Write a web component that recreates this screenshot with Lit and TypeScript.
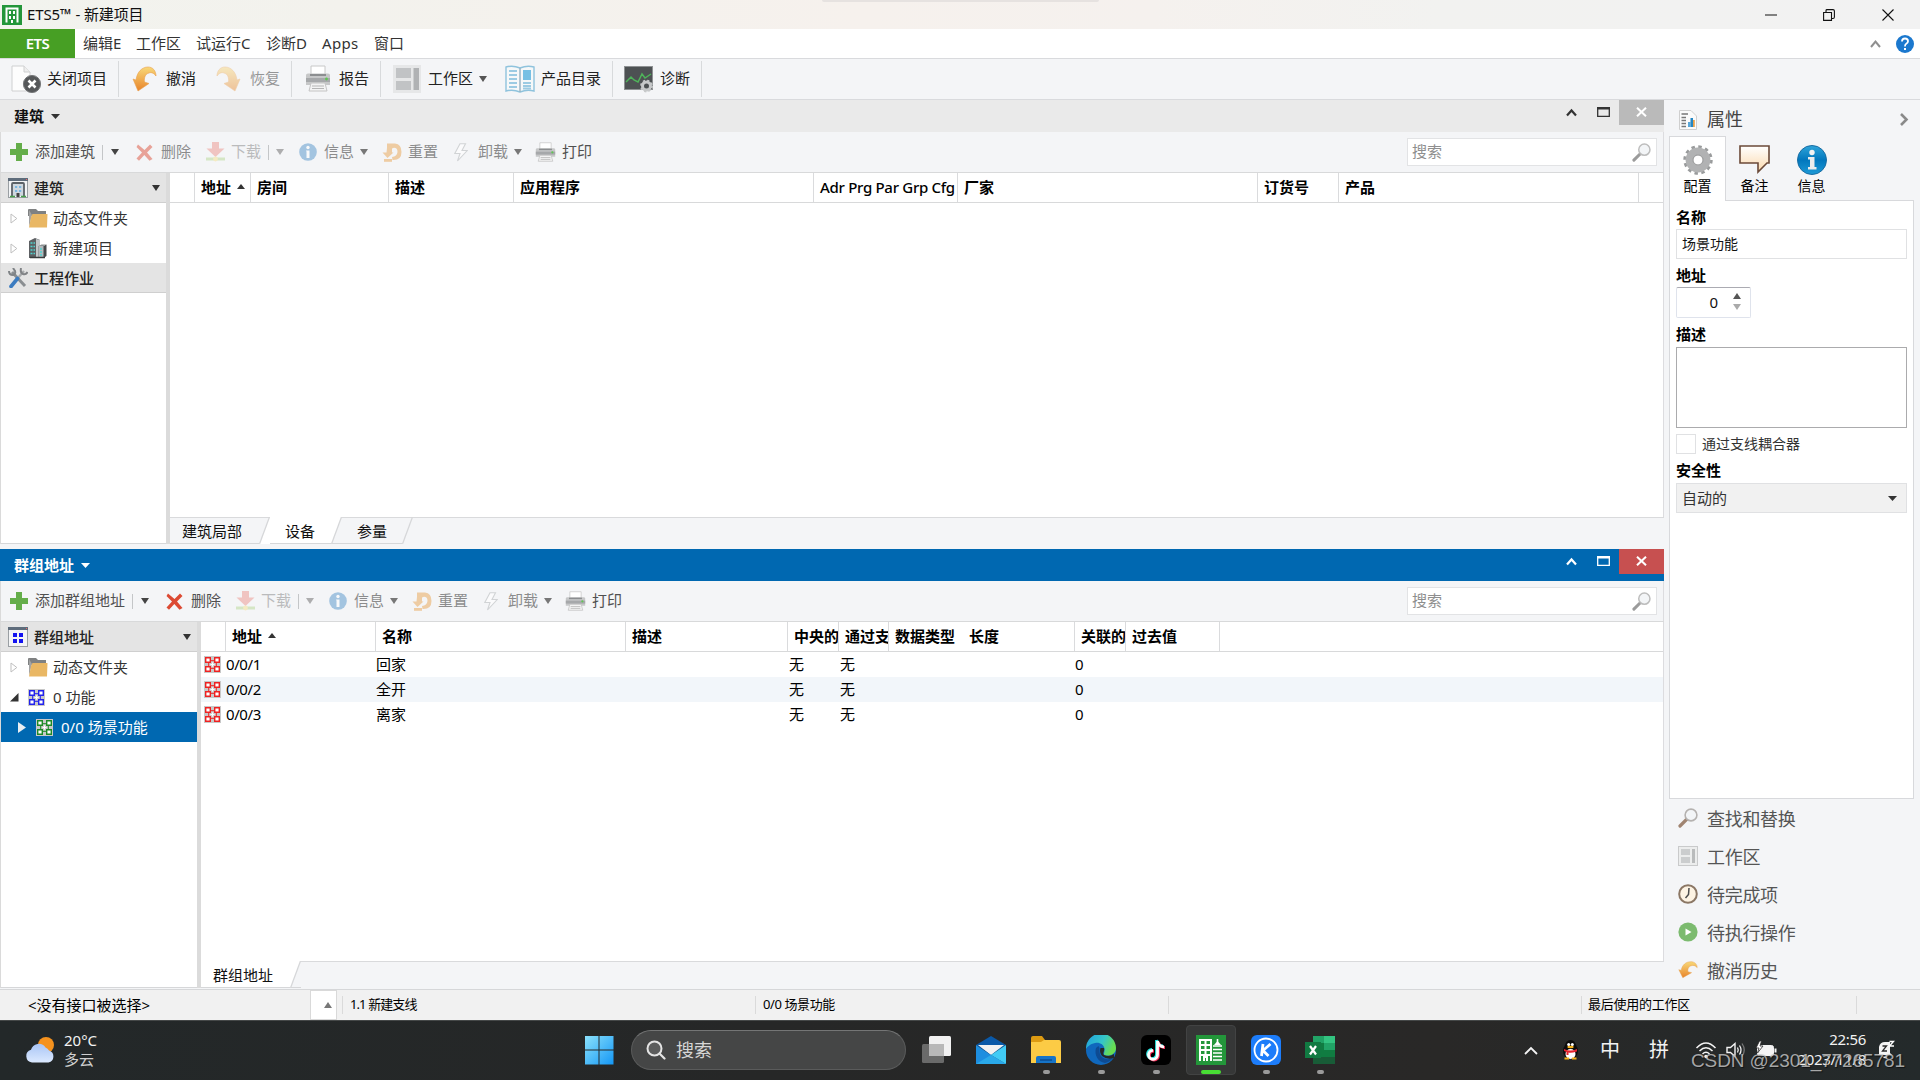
import { LitElement, html, svg, css, nothing } from "lit";
import { customElement } from "lit/decorators.js";

type Item = { x: number; c: unknown; k?: string };

/** Lays items out in a flex row; each item's width reaches to the start of the next one. */
const track = (start: number, end: number, items: Item[]) => html`
  <span class="cell" style="width:${items[0].x - start}px"></span>
  ${items.map((it, i) => {
    const next = i + 1 < items.length ? items[i + 1].x : end;
    return html`<span class="cell ${typeof it.c === "string" ? "t" : ""} ${it.k ?? ""}" style="width:${next - it.x}px">${it.c}</span>`;
  })}`;

const ico = (w: number, h: number, body: unknown, vb = `0 0 ${w} ${h}`) =>
  html`<svg class="ico" width=${w} height=${h} viewBox=${vb} preserveAspectRatio="none">${body}</svg>`;

const down = (color = "#444", w = 8, h = 6) => ico(w, h, svg`<path d="M0 0H10L5 7Z" fill=${color}/>`, "0 0 10 7");
const up = (color = "#444", w = 8, h = 6) => ico(w, h, svg`<path d="M0 7H10L5 0Z" fill=${color}/>`, "0 0 10 7");

const undoShape = svg`
  <defs><linearGradient id="ug" x1="0" y1="0" x2="0" y2="1"><stop offset="0" stop-color="#f8d878"/><stop offset="1" stop-color="#e8842a"/></linearGradient></defs>
  <path d="M1 13L4 14C5 6 10 1 16 1C21 1 24 5 24 10C22 7 19 6 17 7C13 8 12 12 12.500 16L17 17.500L6 25Z" fill="url(#ug)" stroke="#e9a04e" stroke-width=".6"/>`;
const printerShape = svg`
  <path d="M7 1H21V11H7Z" fill="#fff" stroke="#c8c8c8"/>
  <path d="M2 10Q2 8.500 4 8.500H24Q26 8.500 26 10V20H2Z" fill="#c6c7c8"/>
  <path d="M2 13H26V17H2Z" fill="#a6a8aa"/><path d="M6 9H22V11H6Z" fill="#8c8e90"/>
  <circle cx="22.500" cy="14" r="1.400" fill="#5fc653"/>
  <path d="M7 18H21L23 26H5Z" fill="#f3f3f3" stroke="#c4c4c4"/><path d="M8 21H20M8 23.500H20" stroke="#b5b5b5"/>`;
const infoShape = svg`
  <defs><linearGradient id="ig" x1="0" y1="0" x2="0" y2="1"><stop offset="0" stop-color="#2fa5da"/><stop offset=".5" stop-color="#0277bd"/><stop offset="1" stop-color="#1d9ad6"/></linearGradient></defs>
  <circle cx="15" cy="15" r="14.500" fill="url(#ig)" stroke="#1a6da3"/>
  <circle cx="15" cy="7.500" r="2.700" fill="#f2f2f2"/><path d="M11 12H17.500V22H19.500V24.500H11V22H13V14.500H11Z" fill="#ececec"/>`;
const lensShape = (handle: string, ring: string) => svg`
  <path d="M2 18L9 11" stroke=${handle} stroke-width="3.200" stroke-linecap="round"/>
  <circle cx="13" cy="7" r="5.900" fill="#f3f5f7" stroke=${ring} stroke-width="1.600"/>`;

const I = {
  plus: ico(18, 18, svg`<path d="M6 0H12V6H18V12H12V18H6V12H0V6H6Z" fill="#64ad4a"/>`),
  cross: ico(17, 17, svg`<path d="M2 .500L8.500 6L14 .500L16.500 3L11 8.500L16.500 15L13.500 16.800L8.300 11L3 16.800L.500 14.500L6 8.500L.500 3Z" fill="#dc4a33"/>`),
  download: ico(20, 20, svg`<path d="M7 0H14V6.500H19.500L10.500 15L1.500 6.500H7Z" fill="#ec7d73"/><path d="M1 15.500H20V18.500H1Z" fill="#a8d27c"/><circle cx="10.500" cy="17" r="2.400" fill="#f6dc75"/>`),
  info: ico(18, 18, svg`<circle cx="9" cy="9" r="8.800" fill="#2b7cc0"/><circle cx="9" cy="4.500" r="1.700" fill="#fff"/><path d="M7 7.500H10.500V15H7.500V8.800Z" fill="#fff"/>`),
  reset: ico(20, 19, svg`<path d="M5 5V.500H13Q19.500 1 19.500 9Q19.500 17.500 10.500 17L10 14Q15 13.500 15.500 9Q15.500 4.800 12 4.800L10 5.500V9.500H11.500L5.500 15L.500 9.500H4.500Z" fill="#e9a14a"/><path d="M2 16H10V18.800H2Z" fill="#e9a14a"/>`),
  bolt: ico(14, 19, svg`<path d="M6 .700H11.500L8 7.500H13.200L3.500 18L6 10.500H.800Z" fill="#fff" stroke="#c0c3c5" stroke-width="1.100"/>`),
  printer: ico(21, 20, printerShape, "1 0 26 27"),
  lens: ico(19, 19, lensShape("#9b9b9b", "#bdbdbd"), "0 0 20 20"),
  folder: ico(20, 20, svg`<path d="M0 2Q0 1 1 1H8L10 3H18V8H0Z" fill="#7f8182"/><path d="M1 2V19L4 7Z" fill="#a3a4a4"/><path d="M4.500 6H19.500L19 19.500H1L3 9Z" fill="#e9b764"/>`),
  city: ico(19, 21, svg`<path d="M1 3L7 0L12 2V20H1Z" fill="#5d6063"/><path d="M8 1L12 2V20H8Z" fill="#c3c7c9"/><path d="M10.500 8H15.500L18.500 6.500V18L15.500 20H10.500Z" fill="#45484a"/><path d="M10.500 8L13.500 6.500H18.500L15.500 8Z" fill="#8b8f91"/><path d="M10.500 8H15.500V20H10.500Z" fill="#b3babd"/>
    <path d="M2.500 5H4.500M2.500 8.500H4.500M2.500 12H4.500M2.500 15.500H4.500M5.500 5H7M5.500 8.500H7M5.500 12H7M5.500 15.500H7M12 11H14M12 14H14M12 17H14" stroke="#50d2d0" stroke-width="1.500"/><path d="M2 19.500H17" stroke="#3a3c3d" stroke-width="1.500"/>`),
  building: ico(20, 20, svg`<rect x=".500" y=".500" width="19" height="19" fill="#f2f4f6" stroke="#9a9fa3"/><path d="M0 0H20V3H0Z" fill="#5e6c7b"/><path d="M18 1.500h1" stroke="#e66"/><path d="M4 18V6Q4 5 5 5H15Q16 5 16 6V18" fill="#cfd8df" stroke="#5b6268" stroke-width="1.800"/>
    <path d="M7 8h2.200v2H7zM11 8h2.200v2H11zM7 12h2.200v2H7zM11 12h2.200v2H11z" fill="#7bb7e0"/><path d="M8.500 15H11.500V19H8.500Z" fill="#444"/><path d="M2 18.500H7M13 18.500H18" stroke="#46a04a" stroke-width="1.600"/>`),
  tools: ico(20, 20, svg`<path d="M4 4L17 18" stroke="#8a8e91" stroke-width="3"/><path d="M1 3Q1 7 5 7Q8 6 7 3L5 0" fill="none" stroke="#7f8386" stroke-width="2"/><path d="M16 3L9 11" stroke="#a9acae" stroke-width="2.400"/><path d="M13 0Q12 5 15 6Q18 7 19.500 4" fill="none" stroke="#808386" stroke-width="2"/><path d="M9.500 10.500L3 18.500" stroke="#3c7cc0" stroke-width="3.600" stroke-linecap="round"/>`),
  groupHead: ico(20, 20, svg`<rect x=".500" y=".500" width="19" height="19" fill="#f4f5f6" stroke="#9a9fa3"/><path d="M0 0H20V3H0Z" fill="#5e6c7b"/><path d="M18 1.500h1" stroke="#e66"/><path d="M5 6h4v4H5zM11 6h4v4h-4zM5 12h4v4H5zM11 12h4v4h-4z" fill="#1313f0"/>`),
};

const groupIcon = (c: string) =>
  ico(17, 17, svg`<rect width="17" height="17" fill="#c8c8c8"/>
    <path d="M6 4.700H11M6 12.300H11M4.700 6V11M12.300 6V11" stroke=${c} stroke-width="1"/>
    <path d="M1.700 1.700H6.300V6.300H1.700ZM10.700 1.700H15.300V6.300H10.700ZM1.700 10.700H6.300V15.300H1.700ZM10.700 10.700H15.300V15.300H10.700Z" fill="#fff" stroke=${c} stroke-width="1.400"/>
    <path d="M8.500 6.500V10.500M6.500 8.500H10.500" stroke="#fff" stroke-width="1.200"/>`);

const L = {
  closeDoc: ico(30, 28, svg`<path d="M1 1H13L19 7V26H1Z" fill="#fdfdfd" stroke="#cfd0d1"/><path d="M13 1V7H19" fill="#eee" stroke="#cfd0d1"/><circle cx="21" cy="19" r="8.600" fill="#56585a" stroke="#77797b"/><path d="M17.500 15.500L24.500 22.500M24.500 15.500L17.500 22.500" stroke="#fff" stroke-width="2.600"/>`),
  undo: ico(25, 26, undoShape),
  redo: html`<span class="flip">${ico(25, 26, undoShape)}</span>`,
  printer: ico(28, 27, printerShape, "0 0 28 27"),
  workspace: ico(28, 28, svg`<rect width="28" height="28" fill="#e6e7e8"/><path d="M3 3H18V13H3ZM3 16H18V25H3Z" fill="#c1c3c5"/><path d="M20.500 3H26V25H20.500Z" fill="#b0b2b4"/>`),
  book: ico(30, 28, svg`<path d="M1 2Q8 0 15 3Q22 0 29 2V26Q22 24 15 27Q8 24 1 26Z" fill="#f6f8f9" stroke="#8fc3dd" stroke-width="1.400"/><path d="M15 3V27" stroke="#9ab6c5" stroke-width="1.500"/><path d="M4 6H12M4 10H12M4 14H12M4 18H12M4 22H12M18 18H26M18 21H26M18 23.500H26" stroke="#9ccbe3" stroke-width="1.800"/><path d="M18 5H26V15H18Z" fill="#77c0e4"/>`),
  diag: ico(30, 28, svg`<rect x=".500" y="1.500" width="28" height="23" fill="#4d5153" stroke="#8e9193"/><path d="M2 17L7 12L10 15L14 17L18 9L21 13L27 9" fill="none" stroke="#4fb35a" stroke-width="1.500"/><circle cx="22.500" cy="21" r="4" fill="none" stroke="#c7c9ca" stroke-width="3"/><circle cx="22.500" cy="21" r="5.600" fill="none" stroke="#c7c9ca" stroke-width="1.600" stroke-dasharray="2.200 2.200"/>`),
};

const gear = ico(30, 30, svg`<circle cx="15" cy="15" r="13.200" fill="none" stroke="#999b9c" stroke-width="3" stroke-dasharray="3.450 3.450"/><circle cx="15" cy="15" r="8.800" fill="none" stroke="#b1b2b3" stroke-width="7.200"/><circle cx="15" cy="15" r="5" fill="none" stroke="#8e8f90" stroke-width="1"/>`);
const note = ico(31, 29, svg`<defs><linearGradient id="ng" x1="0" y1="0" x2="0" y2="1"><stop offset="0" stop-color="#fff"/><stop offset="1" stop-color="#fbd9ac"/></linearGradient></defs><path d="M1 1H30V18H28L19 27V18H1Z" fill="url(#ng)" stroke="#6b4a38" stroke-width="1.600"/>`);

const sortUp = html`<span class="sort">${up("#333", 8, 5)}</span>`;

const base = css`
  * { box-sizing: border-box; }
  .cell { display: flex; align-items: center; flex: none; white-space: nowrap; height: 100%; }
  .ico { display: block; flex: none; }
`;

@customElement("ets-panel")
class EtsPanel extends LitElement {
  static properties = { kind: { type: String } };
  declare kind: string;
  static styles = [base, css`
    :host { display: block; width: 1664px; }
    .head { display: flex; height: 32px; background: #eaeaea; color: #111; font-weight: 700; }
    .head.on { background: #0068b1; color: #fff; }
    .win { align-items: flex-start; }
    .close { width: 45px; height: 25px; background: #bababa; display: flex; align-items: center; justify-content: center; padding-bottom: 2px; }
    .on .close { background: #c75050; }
    .ctl { padding-top: 7px; }
    .bar { display: flex; height: 40px; background: #f4f5f7; border-left: 1px solid #dadada; border-right: 1px solid #dcdcdf; color: #666; }
    .bar .t, .line .t { padding-bottom: 2px; }
    .dim { opacity: .4; }
    .half { opacity: .66; color: #555; }
    .ihalf { opacity: .48; }
    .str { color: #505050; }
    .vsep { width: 1px; height: 15px; background: #c4c6c8; }
    .search { width: 250px; height: 28px; background: #fff; border: 1px solid #e2e3e5; display: flex; align-items: center; justify-content: space-between; padding: 0 5px 0 4px; color: #8e8e8e; }
    .search span { padding-bottom: 2px; }
    .body { display: flex; border-top: 1px solid #d8d9da; border-left: 1px solid #dadada; }
    .b1 { height: 372px; } .b2 { height: 367px; }
    .tree { background: #fff; border-bottom: 1px solid #d6d7d9; flex: none; color: #333; }
    .b1 .tree { width: 165px; } .b2 .tree { width: 196px; }
    .trow { display: flex; height: 30px; }
    .thead { background: #e4e4e4; border-bottom: 1px solid #cfcfcf; font-weight: 500; }
    .thead .lbl { font-weight: 500; color: #222; }
    .sel { background: #0068b1; color: #fff; }
    .split { width: 4px; background: #dbdbdb; flex: none; }
    .table { flex: 1; display: flex; flex-direction: column; min-width: 0; }
    .grid { flex: 1; background: #fff; border-right: 1px solid #dcdcdf; color: #000; }
    .cols { display: flex; height: 30px; border-bottom: 1px solid #d8d9da; font-weight: 700; }
    .col { border-right: 1px solid #dadbdd; padding: 0 0 2px 6px; overflow: hidden; white-space: nowrap; display: flex; align-items: center; flex: none; gap: 6px; }
    .col.open { border-right-color: transparent; }
    .adr { font-weight: 500; letter-spacing: -.3px; }
    .sort { padding-bottom: 1px; }
    .line { display: flex; height: 25px; }
    .line:nth-child(odd) { background: #f2f6fa; }
    .num { letter-spacing: -.4px; }
    .tabs { display: flex; height: 27px; background: #f4f5f7; color: #111; }
    .tab { border-top: 1px solid #d9dadc; border-bottom: 1px solid #d6d7d9; display: flex; align-items: center; flex: none; }
    .tab.act { background: #fff; border-top-color: #fff; }
    .fill { flex: 1; border-top: 1px solid #d9dadc; }
  `];

  private slant(left: string, right: string) {
    return ico(11, 27, svg`<path d="M0 0H10.500L.500 27H0Z" fill=${left}/><path d="M10.500 0H11V27H.500Z" fill=${right}/>
      ${left === "#fff" ? nothing : svg`<path d="M0 .500H10.500" stroke="#d9dadc"/>`}
      ${right === "#fff" || left === right ? nothing : svg`<path d="M.500 26.500H11" stroke="#d6d7d9"/>`}
      <path d="M10.500 0L.500 27" stroke="#d6d7d9" stroke-width="1.300"/>`);
  }

  private toolbar(two: boolean) {
    const d = two ? 30 : 0;
    const sep = html`<i class="vsep"></i>`;
    return html`<div class="bar">${track(1, 1663, [
      { x: 10, c: I.plus }, { x: 35, c: two ? "添加群组地址" : "添加建筑", k: "str" },
      { x: 102 + d, c: sep }, { x: 111 + d, c: down() },
      { x: 136 + d, c: I.cross, k: two ? "" : "ihalf" }, { x: 161 + d, c: "删除", k: two ? "str" : "half" },
      { x: 205 + d, c: I.download, k: "dim" }, { x: 231 + d, c: "下载", k: "dim" }, { x: 268 + d, c: sep }, { x: 276 + d, c: down(), k: "dim" },
      { x: 299 + d, c: I.info, k: "dim" }, { x: 324 + d, c: "信息", k: "half" }, { x: 360 + d, c: down("#777") },
      { x: 382 + d, c: I.reset, k: "ihalf" }, { x: 408 + d, c: "重置", k: "half" },
      { x: 454 + d, c: I.bolt, k: "half" }, { x: 478 + d, c: "卸载", k: "half" }, { x: 514 + d, c: down("#777") },
      { x: 535 + d, c: I.printer }, { x: 562 + d, c: "打印", k: "str" },
      { x: 1407, c: html`<div class="search"><span>搜索</span>${I.lens}</div>` },
    ])}</div>`;
  }

  private head(two: boolean) {
    const c = two ? "#fff" : "#333";
    return html`<div class="head ${two ? "on" : ""}">${track(0, 1664, [
      { x: 14, c: two ? "群组地址" : "建筑" }, { x: two ? 81 : 51, c: down(c, 9, 5) },
      { x: 1566, k: "win", c: html`<span class="ctl">${ico(11, 10, svg`<path d="M1 8.500L5.500 3.500L10 8.500" fill="none" stroke=${c} stroke-width="2.200"/>`)}</span>` },
      { x: 1597, k: "win", c: html`<span class="ctl">${ico(13, 10, svg`<path d="M.700 1H12.300V9.300H.700Z" fill="none" stroke=${c} stroke-width="1.300"/><path d="M0 0H13V2.500H0Z" fill=${c}/>`)}</span>` },
      { x: 1619, k: "win", c: html`<span class="close">${ico(11, 10, svg`<path d="M1 .700L10 9.300M10 .700L1 9.300" stroke="#fff" stroke-width="2"/>`)}</span>` },
    ])}</div>`;
  }

  private exp = ico(8, 11, svg`<path d="M1 1L6.800 5.500L1 10Z" fill="#fff" stroke="#bfbfbf"/>`);

  private cols(list: [number, unknown, string?][]) {
    return html`<div class="cols">${list.map(([w, t, k]) => html`<div class="col ${k ?? ""}" style="width:${w}px">${t}</div>`)}</div>`;
  }

  render() {
    const two = this.kind === "groups";
    if (!two) {
      return html`${this.head(false)}${this.toolbar(false)}
        <div class="body b1">
          <div class="tree">
            <div class="trow thead">${track(1, 166, [{ x: 8, c: I.building }, { x: 34, c: "建筑", k: "lbl" }, { x: 152, c: down("#333") }])}</div>
            <div class="trow">${track(1, 166, [{ x: 10, c: this.exp }, { x: 28, c: I.folder }, { x: 53, c: "动态文件夹" }])}</div>
            <div class="trow">${track(1, 166, [{ x: 10, c: this.exp }, { x: 28, c: I.city }, { x: 53, c: "新建项目" }])}</div>
            <div class="trow thead">${track(1, 166, [{ x: 8, c: I.tools }, { x: 34, c: "工程作业", k: "lbl" }])}</div>
          </div>
          <div class="split"></div>
          <div class="table">
            <div class="grid">${this.cols([[25, ""], [56, html`地址${sortUp}`], [138, "房间"], [125, "描述"], [300, "应用程序"], [144, "Adr Prg Par Grp Cfg", "adr"], [300, "厂家"], [81, "订货号"], [300, "产品"]])}</div>
            <div class="tabs">
              <div class="tab" style="width:89px">${track(170, 259, [{ x: 182, c: "建筑局部" }])}</div>${this.slant("#f4f5f7", "#fff")}
              <div class="tab act" style="width:61px">${track(270, 331, [{ x: 285, c: "设备" }])}</div>${this.slant("#fff", "#f4f5f7")}
              <div class="tab" style="width:60px">${track(342, 402, [{ x: 357, c: "参量" }])}</div>${this.slant("#f4f5f7", "#f4f5f7")}
              <div class="fill"></div>
            </div>
          </div>
        </div>`;
    }
    const names = ["回家", "全开", "离家"];
    return html`${this.head(true)}${this.toolbar(true)}
      <div class="body b2">
        <div class="tree">
          <div class="trow thead">${track(1, 197, [{ x: 8, c: I.groupHead }, { x: 34, c: "群组地址", k: "lbl" }, { x: 183, c: down("#333") }])}</div>
          <div class="trow">${track(1, 197, [{ x: 10, c: this.exp }, { x: 28, c: I.folder }, { x: 53, c: "动态文件夹" }])}</div>
          <div class="trow">${track(1, 197, [{ x: 10, c: ico(9, 9, svg`<path d="M8.500 0V8.500H0Z" fill="#333"/>`) }, { x: 28, c: groupIcon("#2222ee") }, { x: 53, c: "0 功能" }])}</div>
          <div class="trow sel">${track(1, 197, [{ x: 18, c: ico(8, 11, svg`<path d="M0 0L8 5.500L0 11Z" fill="#e9eef2"/>`) }, { x: 36, c: groupIcon("#1d8a25") }, { x: 61, c: "0/0 场景功能" }])}</div>
        </div>
        <div class="split"></div>
        <div class="table">
          <div class="grid">
            ${this.cols([[25, ""], [150, html`地址${sortUp}`], [250, "名称"], [162, "描述"], [51, "中央的"], [50, "通过支"], [74, "数据类型", "open"], [112, "长度"], [51, "关联的"], [94, "过去值"]])}
            ${names.map((n, i) => html`<div class="line">${track(201, 1663, [{ x: 204, c: groupIcon("#ee2222") }, { x: 226, c: `0/0/${i + 1}`, k: "num" }, { x: 376, c: n }, { x: 789, c: "无" }, { x: 840, c: "无" }, { x: 1075, c: "0" }])}</div>`)}
          </div>
          <div class="tabs">
            <div class="tab act" style="width:89px">${track(201, 290, [{ x: 213, c: "群组地址" }])}</div>${this.slant("#fff", "#f4f5f7")}
            <div class="fill"></div>
          </div>
        </div>
      </div>`;
  }
}

@customElement("ets-sidebar")
class EtsSidebar extends LitElement {
  static styles = [base, css`
    :host { display: flex; flex-direction: column; width: 256px; height: 889px; background: #f4f5f7; padding-left: 5px; }
    .top { display: flex; height: 36px; font-size: 18px; color: #444; padding-top: 3px; }
    .top .t { padding-bottom: 2px; }
    .tabs { display: flex; height: 65px; font-size: 14px; color: #000; }
    .tab { width: 57px; display: flex; flex-direction: column; align-items: center; padding-top: 8px; border-bottom: 1px solid #d8d9dc; }
    .tab.act { border: 1px solid #d8d9dc; border-bottom: 0; background: #fff; padding-top: 7px; }
    .pic { height: 32px; padding-top: 1px; display: flex; }
    .tab span { line-height: 20px; }
    .rest { width: 74px; border-bottom: 1px solid #d8d9dc; }
    .form { width: 245px; height: 598px; border: 1px solid #d8d9dc; border-top: 0; background: #fff; padding: 6px 6px 0 6px; color: #333; }
    .h { font-weight: 700; color: #000; height: 22px; line-height: 20px; }
    .up1 { line-height: 18px; }
    .inp { height: 30px; border: 1px solid #e0e1e3; display: flex; align-items: center; padding: 0 0 0 5px; font-size: 14px; color: #111; margin-bottom: 6px; }
    .spin { width: 75px; height: 31px; border: 1px solid #dfe3ec; border-top-color: #ababb2; border-radius: 2px; display: flex; align-items: center; justify-content: flex-end; padding: 0 9px 1px 0; gap: 15px; color: #111; margin: 0 0 7px; }
    .arrows { display: flex; flex-direction: column; gap: 5px; padding-bottom: 2px; }
    .area { height: 81px; border: 1px solid #ababad; margin-bottom: 6px; }
    .chk { display: flex; align-items: center; gap: 6px; height: 20px; font-size: 14px; margin-bottom: 7px; }
    .box { width: 20px; height: 20px; border: 1px solid #e0e1e3; }
    .dd { height: 30px; background: #f1f1f1; border: 1px solid #e0e1e3; display: flex; align-items: center; justify-content: space-between; padding: 0 9px 0 5px; }
    .li { display: flex; align-items: center; height: 38px; gap: 9px; padding-left: 9px; font-size: 18px; color: #555; letter-spacing: -.3px; }
    .li span { padding-top: 1px; }
  `];
  render() {
    const li = (i: unknown, t: string) => html`<div class="li">${i}<span>${t}</span></div>`;
    return html`
      <div class="top">${track(1669, 1920, [
        { x: 1679, c: ico(18, 20, svg`<path d="M.500 .500H12L17.500 6V19.500H.500Z" fill="#fafafa" stroke="#cfcfcf"/><path d="M2.500 4H9M2.500 7.500H7M2.500 10.500H7M2.500 13.500H7M2.500 16.500H7" stroke="#777" stroke-width="1.300"/><path d="M9 17V12H11.500V17Z" fill="#5aa7d8"/><path d="M11.500 17V8H14V17Z" fill="#2487c4"/><path d="M14 17V10H15.800V17Z" fill="#e9a14a"/>`) },
        { x: 1707, c: "属性" },
        { x: 1899, c: ico(10, 13, svg`<path d="M2 1L7.500 6.500L2 12" fill="none" stroke="#8a8a8a" stroke-width="2.600"/>`) },
      ])}</div>
      <div class="tabs">
        <div class="tab act"><div class="pic">${gear}</div><span>配置</span></div>
        <div class="tab"><div class="pic">${note}</div><span>备注</span></div>
        <div class="tab"><div class="pic">${ico(30, 30, infoShape)}</div><span>信息</span></div>
        <div class="rest"></div>
      </div>
      <div class="form">
        <div class="h">名称</div><div class="inp">场景功能</div>
        <div class="h">地址</div><div class="spin">0<div class="arrows">${up("#555", 8, 6)}${down("#aaa", 8, 6)}</div></div>
        <div class="h up1">描述</div><div class="area"></div>
        <div class="chk"><i class="box"></i>通过支线耦合器</div>
        <div class="h up1">安全性</div><div class="dd">自动的${down("#333", 9, 5)}</div>
      </div>
      <div class="list">
        ${li(ico(20, 20, lensShape("#a08471", "#b5b2b0")), "查找和替换")}
        ${li(ico(20, 20, svg`<rect x=".500" y=".500" width="19" height="19" fill="#eceded" stroke="#c9cacb"/><path d="M3 3H12V9H3ZM3 11H12V17H3Z" fill="#cbcdce"/><path d="M14 3H17V17H14Z" fill="#b9bbbc"/>`), "工作区")}
        ${li(ico(20, 20, svg`<circle cx="10" cy="10" r="8.800" fill="#fdf3e3" stroke="#8b7765" stroke-width="2"/><path d="M11 4L10.500 10.500L7.500 14" fill="none" stroke="#4c4c4c" stroke-width="1.500"/>`), "待完成项")}
        ${li(ico(20, 20, svg`<circle cx="10" cy="10" r="9.600" fill="#7cbb6f"/><path d="M7.500 6.500L13.500 10L7.500 13.500Z" fill="#fff"/>`), "待执行操作")}
        ${li(ico(20, 18, undoShape, "0 0 25 27"), "撤消历史")}
      </div>`;
  }
}

@customElement("win-taskbar")
class WinTaskbar extends LitElement {
  static styles = [base, css`
    :host { display: flex; height: 60px; background: linear-gradient(90deg, #232829, #262727 40%, #292827 75%, #242a2b); color: #f2f2f2; border-top: 1px solid #454848; padding-bottom: 1px; }
    .two { display: flex; flex-direction: column; line-height: 19px; justify-content: center; }
    .dimt { color: #cfcfcf; }
    .pill { width: 275px; height: 40px; border-radius: 20px; background: #454646; border: 1px solid #5a5b5b; border-top-color: #747575; display: flex; align-items: center; gap: 10px; padding-left: 14px; font-size: 18px; color: #d6d6d6; }
    .app { width: 50px; height: 50px; display: flex; flex-direction: column; align-items: center; padding-top: 9px; border-radius: 4px; border: 1px solid transparent; gap: 5px; }
    .app.act { background: #363737; border-color: #424343; }
    .dot { width: 7px; height: 4px; border-radius: 2px; background: #9a9a9a; }
    .act .dot { width: 20px; background: #48dd34; }
    .ime { font-size: 20px; }
    .clock { align-items: flex-end; width: 71px; padding-bottom: 2px; line-height: 20px; }
    .clock span { letter-spacing: -.3px; }
  `];
  render() {
    const app = (i: unknown, k = "", dot = true) => html`<div class="app ${k}">${i}${dot ? html`<i class="dot"></i>` : nothing}</div>`;
    const a = (b: unknown) => ico(30, 30, b);
    return track(0, 1920, [
      { x: 25, c: ico(30, 26, svg`<defs><linearGradient id="c" x1="0" y1="0" x2="0" y2="1"><stop offset="0" stop-color="#a9c5f5"/><stop offset="1" stop-color="#dbe9ff"/></linearGradient></defs><circle cx="21" cy="8" r="8" fill="#f5921e"/><path d="M7 25.500A6.500 6.500 0 0 1 6 12.800A8 8 0 0 1 20.500 10.500A6 6 0 0 1 24 13.500A6.200 6.200 0 0 1 23.500 25.500Z" fill="url(#c)"/>`) },
      { x: 64, c: html`<div class="two"><span>20°C</span><span class="dimt">多云</span></div>` },
      { x: 584, c: a(svg`<defs><linearGradient id="w" x1="0" y1="0" x2="1" y2="1"><stop offset="0" stop-color="#8be1fb"/><stop offset="1" stop-color="#1497f5"/></linearGradient></defs><path d="M1 1H14.500V14.500H1ZM15.500 1H29.500V14.500H15.500ZM1 15.500H14.500V29.500H1ZM15.500 15.500H29.500V29.500H15.500Z" fill="url(#w)"/>`) },
      { x: 631, c: html`<div class="pill">${ico(20, 20, svg`<circle cx="8.500" cy="8.500" r="7" fill="#5c5d5d" stroke="#e4e4e4" stroke-width="2"/><path d="M13.500 13.500L18.500 18.500" stroke="#e4e4e4" stroke-width="2.200" stroke-linecap="round"/>`)}<span>搜索</span></div>` },
      { x: 911, c: app(a(svg`<rect x="8" y="1" width="22" height="20" rx="1.500" fill="#f1f1f1"/><rect x="1" y="9" width="22" height="19" rx="1.500" fill="#777" opacity=".85"/><path d="M8 9H23V21H8Z" fill="#b8b8b8"/>`), "", false) },
      { x: 966, c: app(a(svg`<path d="M0 10L15 1L30 10L15 20Z" fill="#0a59a8"/><path d="M2 10H28L15 20Z" fill="#f2f2f2"/><path d="M0 10L15 20L30 29H0Z" fill="#1d8ee0"/><path d="M30 10L15 20L30 29Z" fill="#41cbf5"/><path d="M0 29L15 20L30 29Z" fill="#2aa9ea"/>`), "", false) },
      { x: 1021, c: app(a(svg`<path d="M0 3Q0 1 2 1H11L14 5H28V12H0Z" fill="#dd9b12"/><path d="M0 7L10 7L13 5H28Q30 5 30 7V28H0Z" fill="#fccb45"/><path d="M5 28V23Q5 21 7 21H23Q25 21 25 23V28Z" fill="#1674c8"/><path d="M9 25H21" stroke="#0c4f96" stroke-width="1.600"/>`)) },
      { x: 1076, c: app(a(svg`<defs><linearGradient id="e" x1="0" y1="0" x2="1" y2=".4"><stop offset="0" stop-color="#1f9fe0"/><stop offset=".6" stop-color="#35c6c8"/><stop offset="1" stop-color="#68dd51"/></linearGradient></defs>
        <circle cx="15" cy="15" r="15" fill="#1068bd"/><path d="M0 14A15 15 0 0 1 30 13C30 19 24 22 18.500 20C17 19 19 17 18.500 14C18 9 13 7 9 8C4 9 1 12 0 14Z" fill="url(#e)"/><path d="M10 13C8 20 12 27 19 28Q24 27 27 23C20 26 13 23 13.500 15Q14 13 12.500 11Z" fill="#0e4b93"/><path d="M18 13C19 16 16 18 18 20Q23 22.500 28 19V23Q21 25 16 21Q13 17 14.500 13Z" fill="#262828"/>`)) },
      { x: 1131, c: app(a(svg`<rect width="30" height="30" rx="6" fill="#000"/><g fill="none" stroke-width="2.800"><path d="M15.500 5V19A4.500 4.500 0 1 1 11 14.500M15.500 5Q16.500 11 22 11" stroke="#2ce8e4"/><path d="M17.500 7V20.500A4.500 4.500 0 1 1 13 16M17.500 7Q18.500 12.500 24 12.500" stroke="#f7325a"/><path d="M16.500 6V19.800A4.500 4.500 0 1 1 12 15.300M16.500 6Q17.500 11.800 23 11.800" stroke="#fff"/></g>`)) },
      { x: 1186, c: app(a(svg`<rect width="30" height="30" fill="#23963a"/><path d="M4 26V5H15V26M8 26V22H11V26M4 10H15M4 15H15M4 20H15M9.500 5V20" fill="none" stroke="#fff" stroke-width="2"/><path d="M17 11H26M17 14.500H26M17 18H26M17 21.500H26M17 25H26M21.500 4V10" stroke="#fff" stroke-width="1.600"/><path d="M18 10L21.500 6L25 10Z" fill="#fff"/>`), "act") },
      { x: 1241, c: app(a(svg`<rect width="30" height="30" rx="6" fill="#1d7dfa"/><circle cx="15" cy="15" r="11.500" fill="none" stroke="#fff" stroke-width="1.800"/><path d="M12 9L10.500 21M19.500 9L12 15.500L17.500 21" fill="none" stroke="#fff" stroke-width="2.800"/>`)) },
      { x: 1295, c: app(a(svg`<path d="M8 1H19V8H8Z" fill="#21a366"/><path d="M19 1H30V8H19Z" fill="#33c481"/><path d="M8 8H19V15H8Z" fill="#107c41"/><path d="M19 8H30V15H19Z" fill="#21a366"/><path d="M8 15H30V22H8Z" fill="#107c41"/><path d="M8 22H30V29H8Z" fill="#185c37"/><path d="M0 7H16V23H0Z" fill="#117a42"/><path d="M5 11L11 19.500M11 11L5 19.500" stroke="#fff" stroke-width="2.200"/>`)) },
      { x: 1524, c: ico(14, 9, svg`<path d="M1 8L7 2L13 8" fill="none" stroke="#f4f4f4" stroke-width="1.800"/>`) },
      { x: 1562, c: ico(17, 20, svg`<ellipse cx="8.500" cy="11" rx="7.500" ry="8" fill="#0c0c0c"/><ellipse cx="8.500" cy="6" rx="5.500" ry="6" fill="#0c0c0c"/><ellipse cx="8.500" cy="14" rx="5" ry="5" fill="#fff"/><circle cx="6.700" cy="4.500" r="1.500" fill="#fff"/><circle cx="10.300" cy="4.500" r="1.500" fill="#fff"/><ellipse cx="8.500" cy="7" rx="3.200" ry="1.200" fill="#f7b21b"/><path d="M2 9Q8.500 12 15 9V11.500Q8.500 13.500 6.500 12.500V15H4.500V12L2 11Z" fill="#e3232d"/><path d="M2.500 18.500H7M10 18.500H14.500" stroke="#f7b21b" stroke-width="2.200"/>`) },
      { x: 1600, c: "中", k: "ime" }, { x: 1649, c: "拼", k: "ime" },
      { x: 1695, c: ico(22, 18, svg`<g fill="none" stroke="#f4f4f4" stroke-width="1.500"><path d="M1.500 7Q11 -3 20.500 7M4.500 10Q11 3.500 17.500 10M7.500 13Q11 9.500 14.500 13"/></g><circle cx="11" cy="15.500" r="1.800" fill="#f4f4f4"/>`) },
      { x: 1726, c: ico(20, 18, svg`<path d="M1 6.500H4.500L9 2.500V15.500L4.500 11.500H1Z" fill="none" stroke="#f4f4f4" stroke-width="1.400"/><path d="M11.500 6.500Q13 9 11.500 11.500M13.500 4.500Q16.500 9 13.500 13.500" fill="none" stroke="#f4f4f4" stroke-width="1.300"/><path d="M16 2.500Q20.500 9 16 15.500" fill="none" stroke="#777" stroke-width="1.300"/>`) },
      { x: 1755, c: ico(22, 18, svg`<rect x="2.500" y="4.500" width="16" height="10" rx="2" fill="#f4f4f4" stroke="#f4f4f4"/><path d="M20.500 7.500V11.500" stroke="#f4f4f4" stroke-width="2"/><path d="M4.500 0L1 7H4L2.500 12L8 5H5L6.500 0Z" fill="#fff" stroke="#292929" stroke-width=".8"/>`) },
      { x: 1795, c: html`<div class="two clock"><span>22:56</span><span>2023/11/8</span></div>` },
      { x: 1877, c: ico(18, 20, svg`<path d="M2 14V7Q3 2 8 2H13V13L15 15H1Z" fill="#f4f4f4"/><path d="M5 16.500Q8 20 11 16.500Z" fill="#f4f4f4"/><path d="M5.500 6H9.500L5.500 11H10" fill="none" stroke="#292929" stroke-width="1.300"/><path d="M12.500 1.500H16.500L12.500 6H17" fill="none" stroke="#fff" stroke-width="1.400"/>`) },
    ]);
  }
}

@customElement("app-root")
export class AppRoot extends LitElement {
  static styles = [base, css`
    :host { display: block; width: 1920px; height: 1080px; overflow: hidden; position: relative; background: #f4f5f7;
      font-family: "Noto Sans", "Noto Sans CJK SC", sans-serif; font-size: 15px; line-height: 20px; color: #222; }
    .title { display: flex; height: 29px; background: linear-gradient(90deg, #f2f3ee 0%, #f3f2ed 18%, #f6f1ed 45%, #f5f1ee 60%, #f2f2f0 75%, #f2f2f2 100%); color: #111; }
    .notch { width: 277px; height: 2px; background: #e6e2e0; border-radius: 0 0 4px 4px; }
    .title .t, .menu .t, .ribbon .t { padding-bottom: 2px; }
    .tt { letter-spacing: -.1px; }
    .nt { align-items: flex-start; }
    .menu { display: flex; height: 30px; background: #fff; border-bottom: 1px solid #d9dadd; color: #333; }
    .ets { width: 75px; height: 29px; background: #479f24; color: #fff; font-weight: 600; display: flex; align-items: center; justify-content: center; letter-spacing: -.6px; padding-bottom: 1px; }
    .apps { letter-spacing: .3px; }
    .ribbon { display: flex; height: 41px; background: #f4f5f7; border-bottom: 1px solid #d9dadd; color: #222; }
    .ribbon .ico { margin-bottom: 1px; }
    .vs { width: 1px; height: 36px; background: #d8dadc; }
    .faded { opacity: .45; }
    .flip { transform: scaleX(-1); }
    .main { display: flex; height: 889px; }
    .left { width: 1664px; display: flex; flex-direction: column; gap: 5px; }
    .status { display: flex; height: 31px; background: #f1f1f1; border-top: 1px solid #d6d7d9; color: #000; }
    .sm { font-size: 13px; letter-spacing: -.4px; padding-bottom: 3px; }
    .tight { letter-spacing: -.9px; }
    .last { letter-spacing: -.25px; }
    .ss { width: 1px; height: 18px; background: #dadada; }
    .upb { width: 27px; height: 30px; background: #fff; border: 1px solid #d9d9d9; display: flex; align-items: center; justify-content: center; padding-left: 8px; }
    .mark { position: absolute; left: 1691px; top: 1049px; font: 19px/24px "Liberation Sans", sans-serif; letter-spacing: -.1px; color: rgba(205,205,205,.78); text-shadow: 1px 1px 1px rgba(0,0,0,.5); white-space: nowrap; }
  `];
  render() {
    const vs = html`<i class="vs"></i>`;
    const ss = html`<i class="ss"></i>`;
    return html`
      <div class="title">${track(0, 1920, [
        { x: 2, c: ico(20, 20, svg`<rect width="20" height="20" fill="#23963a"/><path d="M4.500 17.500V3.500H15.500V17.500" fill="none" stroke="#fff" stroke-width="2"/><path d="M7 6h2v3H7zM11 6h2v3h-2zM7 11h2v3H7zM11 11h2v3h-2z" fill="#fff"/><path d="M9 15H11V18H9Z" fill="#fff"/>`) },
        { x: 27, c: "ETS5™ - 新建项目", k: "tt" },
        { x: 822, c: html`<i class="notch"></i>`, k: "nt" },
        { x: 1765, c: ico(12, 2, svg`<path d="M0 1H12" stroke="#111"/>`) },
        { x: 1823, c: ico(12, 12, svg`<path d="M.600 3.500H8.500V11.400H.600ZM3 3V1.500Q3 .600 4 .600H10Q11.400 .600 11.400 2V8Q11.400 9.500 10 9.500H8.500" fill="none" stroke="#111" stroke-width="1.100"/>`) },
        { x: 1882, c: ico(12, 12, svg`<path d="M.500 .500L11.500 11.500M11.500 .500L.500 11.500" stroke="#111" stroke-width="1.100"/>`) },
      ])}</div>
      <div class="menu">${track(0, 1920, [
        { x: 0, c: html`<span class="ets">ETS</span>` },
        { x: 83, c: "编辑E" }, { x: 136, c: "工作区" }, { x: 196, c: "试运行C" }, { x: 266, c: "诊断D" }, { x: 322, c: "Apps", k: "apps" }, { x: 374, c: "窗口" },
        { x: 1870, c: ico(11, 9, svg`<path d="M1 8L5.500 2.500L10 8" fill="none" stroke="#8f8f8f" stroke-width="2"/>`) },
        { x: 1896, c: ico(18, 18, svg`<circle cx="9" cy="9" r="9" fill="#1b78ce"/><path d="M6 6.500Q6 3.500 9 3.500Q12 3.500 12 6.200Q12 8 10 9Q9 9.500 9 11.500" fill="none" stroke="#fff" stroke-width="1.800"/><path d="M8 13H10V15H8Z" fill="#fff"/>`) },
      ])}</div>
      <div class="ribbon">${track(0, 1920, [
        { x: 11, c: L.closeDoc }, { x: 47, c: "关闭项目" }, { x: 118, c: vs },
        { x: 132, c: L.undo }, { x: 166, c: "撤消" }, { x: 216, c: L.redo, k: "faded" }, { x: 250, c: "恢复", k: "faded" }, { x: 291, c: vs },
        { x: 304, c: L.printer }, { x: 339, c: "报告" }, { x: 380, c: vs },
        { x: 393, c: L.workspace }, { x: 428, c: "工作区" }, { x: 479, c: down("#555") },
        { x: 505, c: L.book }, { x: 541, c: "产品目录" }, { x: 612, c: vs },
        { x: 624, c: L.diag }, { x: 660, c: "诊断" }, { x: 701, c: vs },
      ])}</div>
      <div class="main">
        <div class="left"><ets-panel kind="buildings"></ets-panel><ets-panel kind="groups"></ets-panel></div>
        <ets-sidebar></ets-sidebar>
      </div>
      <div class="status">${track(0, 1920, [
        { x: 28, c: "<没有接口被选择>" },
        { x: 310, c: html`<span class="upb">${up("#777", 8, 6)}</span>` },
        { x: 342, c: ss }, { x: 350, c: "1.1 新建支线", k: "sm tight" },
        { x: 755, c: ss }, { x: 763, c: "0/0 场景功能", k: "sm" },
        { x: 1168, c: ss }, { x: 1581, c: ss }, { x: 1588, c: "最后使用的工作区", k: "sm last" }, { x: 1856, c: ss },
      ])}</div>
      <win-taskbar></win-taskbar>
      <div class="mark">CSDN @2301_77265781</div>`;
  }
}
